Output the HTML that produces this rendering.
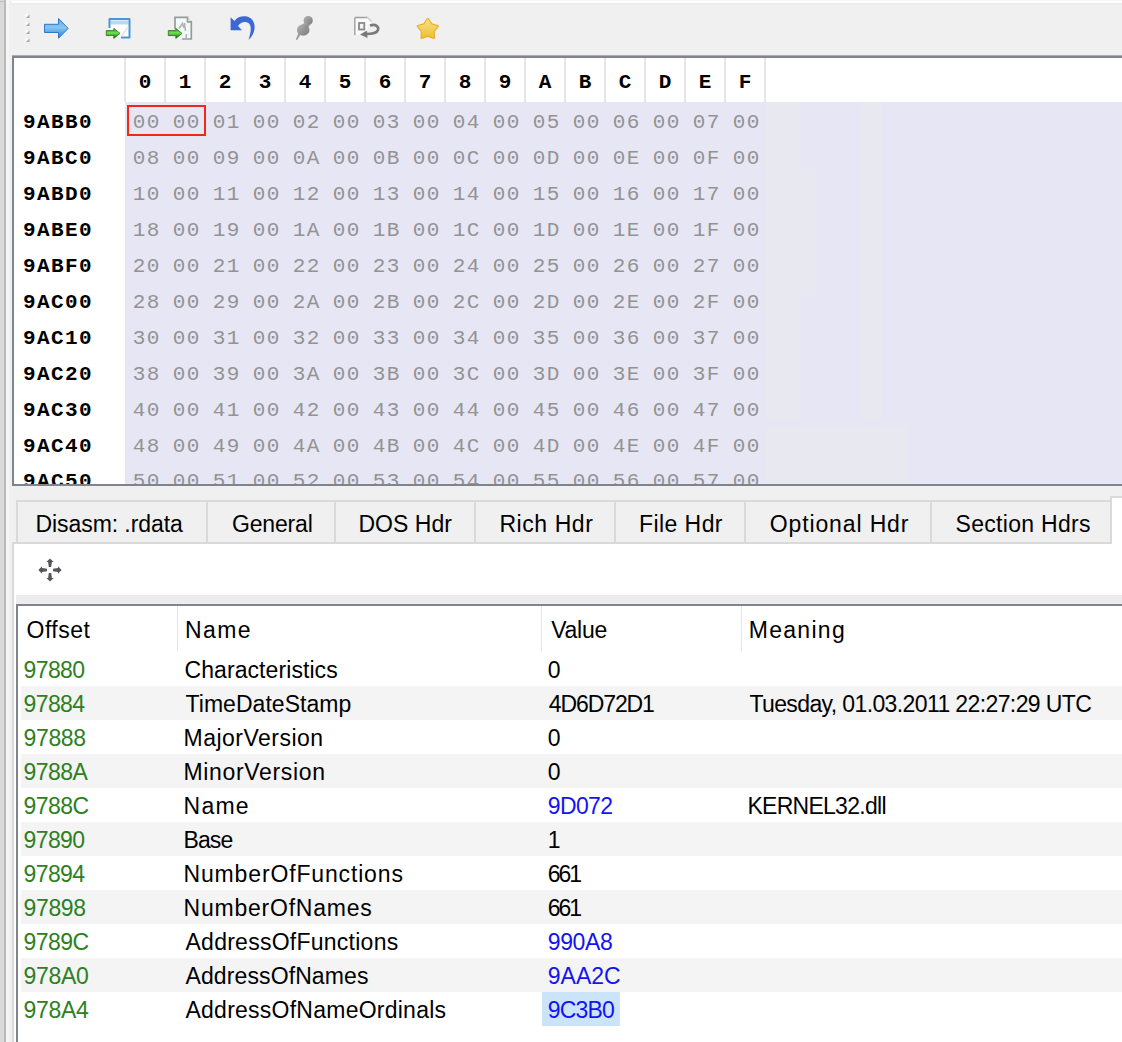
<!DOCTYPE html>
<html><head><meta charset="utf-8"><style>
*{margin:0;padding:0;box-sizing:border-box}
html,body{width:1122px;height:1042px;overflow:hidden;background:#f0f0f0;position:relative}
.a{position:absolute}
.m{font-family:"Liberation Mono", monospace;font-size:21px;letter-spacing:1.4px;white-space:pre;line-height:0}
.s{font-family:"Liberation Sans", sans-serif;font-size:23px;white-space:pre;line-height:0}
</style></head>
<body>
<div class="a" style="left:0;top:0;width:4px;height:1042px;background:#d9d9d9"></div>
<div class="a" style="left:4px;top:0;width:2px;height:1042px;background:#b9b9b9"></div>
<div class="a" style="left:6px;top:0;width:3px;height:1042px;background:#f5f5f5"></div>
<div class="a" style="left:9px;top:0;width:1113px;height:1px;background:#f7f7f7"></div>
<div class="a" style="left:12px;top:1px;width:1110px;height:2px;background:#ffffff"></div>
<div class="a" style="left:0;top:1px;width:6px;height:1px;background:#c0c0c0"></div>
<div class="a" style="left:9px;top:3px;width:1113px;height:2px;background:#ececec"></div>
<svg class="a" style="left:0;top:0" width="470" height="56" viewBox="0 0 470 56">
<defs>
<linearGradient id="bl" x1="0" y1="0" x2="0" y2="1"><stop offset="0" stop-color="#5aa7e3"/><stop offset="0.45" stop-color="#86c6f0"/><stop offset="1" stop-color="#2f7fcf"/></linearGradient>
<linearGradient id="gr" x1="0" y1="0" x2="0" y2="1"><stop offset="0" stop-color="#2f8a22"/><stop offset="0.45" stop-color="#6ae84e"/><stop offset="0.75" stop-color="#3a9a2a"/><stop offset="1" stop-color="#14400c"/></linearGradient>
<linearGradient id="st" x1="0" y1="0" x2="0" y2="1"><stop offset="0" stop-color="#f8e27a"/><stop offset="0.5" stop-color="#f2d060"/><stop offset="1" stop-color="#f0bf2a"/></linearGradient>
<linearGradient id="pin" x1="0" y1="0" x2="1" y2="1"><stop offset="0" stop-color="#b4b4b4"/><stop offset="1" stop-color="#7a7a7a"/></linearGradient>
<filter id="bl1" x="-20%" y="-20%" width="140%" height="140%"><feGaussianBlur stdDeviation="0.6"/></filter>
</defs>
<!-- grip -->
<g fill="#fafafa"><rect x="25" y="14" width="3" height="3"/><rect x="25" y="22" width="3" height="3"/><rect x="25" y="30" width="3" height="3"/><rect x="25" y="38" width="3" height="3"/></g>
<g fill="#a8a8a8"><path d="M29.5,14.5 L29.5,18 L26,18 Z"/><path d="M29.5,22.5 L29.5,26 L26,26 Z"/><path d="M29.5,30.5 L29.5,34 L26,34 Z"/><path d="M29.5,38.5 L29.5,42 L26,42 Z"/></g>
<!-- blue arrow -->
<path d="M44.5,24.3 L58.5,24.3 L58.5,18.5 L68.2,28.4 L58.5,38.3 L58.5,32.5 L44.5,32.5 Z" fill="url(#bl)" stroke="#2f78c8" stroke-width="1" stroke-linejoin="round"/>
<!-- window icon -->
<rect x="110" y="19.5" width="19" height="17.5" fill="#ffffff"/>
<rect x="110.5" y="20.5" width="18" height="4" fill="#b6d9ef"/>
<path d="M109.5,28 L109.5,19 L129.5,19 L129.5,37.5 L121,37.5" fill="none" stroke="#4a95d4" stroke-width="2" stroke-linejoin="round"/>
<path d="M121.5,36 L128,27" stroke="#e6e6e6" stroke-width="2"/>
<path d="M106.3,30.6 L113.8,30.6 L113.8,28.4 L120,33.4 L113.8,38.4 L113.8,35.6 L106.3,35.6 Z" fill="url(#gr)" stroke="#2a6a1c" stroke-width="0.8" stroke-linejoin="round"/>
<!-- document icon -->
<path d="M175,17.3 L187.5,17.3 L191.3,21.5 L191.3,39 L175,39 Z" fill="#f0fafa"/>
<path d="M175,29 L175,17.3 L187.5,17.3 L187.5,21.8 L191.3,21.8 L191.3,39 L182,39" fill="none" stroke="#9a9a9a" stroke-width="1.7"/>
<path d="M187.8,17.5 L191.3,21" stroke="#c8c8c8" stroke-width="1"/>
<path d="M179,28.5 L182.5,23.5 L184,28 M184.5,23 L185.5,31 M186.5,34 L186,38" stroke="#b0b0b0" stroke-width="1.5" fill="none"/>
<path d="M168.3,30.6 L175.8,30.6 L175.8,28.4 L182,33.4 L175.8,38.4 L175.8,35.6 L168.3,35.6 Z" fill="url(#gr)" stroke="#2a6a1c" stroke-width="0.8" stroke-linejoin="round"/>
<!-- undo -->
<path d="M230.6,17.3 L230.6,30.2 L242,30.2 L238,26 C241,21.5 246,21 249,23.5 C252.5,27 250,35 248.5,40 C253,36 256,29 254,23 C251.5,16 244,15.5 239.5,17 C237,18 235.5,19.5 234.5,21 Z" fill="#3b68d2"/>
<!-- pushpin -->
<g fill="url(#pin)" filter="url(#bl1)">
<circle cx="308.2" cy="20.5" r="4.6"/>
<ellipse cx="303.2" cy="30" rx="6.3" ry="5.8"/>
<path d="M305,22 L310,25 L306,29 L302,25 Z"/>
<path d="M298.5,33 L300.5,34.5 L297,40 L295.8,39.5 Z"/>
</g>
<!-- swap/copy icon -->
<path d="M355.5,18 L367.5,18 L371,21.5 L371,24 L368,26 L367,34.5 L355.5,34.5 Z" fill="#fafafa"/>
<path d="M354.8,17.5 L367.5,17.5 M354.8,17.5 L354.8,35" stroke="#a0a0a0" stroke-width="1.4" fill="none"/>
<path d="M367.5,17.5 L371.5,21.5" stroke="#c8c8c8" stroke-width="1.2" fill="none"/>
<rect x="359" y="23" width="5.3" height="6.5" fill="#f4f4f4" stroke="#8a8a8a" stroke-width="1.8"/>
<path d="M370,25.5 C376,23.5 379,27 378,30 C377,33 372,34 366,34" fill="none" stroke="#7a7a7a" stroke-width="2.6"/>
<path d="M360,34.5 L367,30.5 L367.5,38 Z" fill="#7a7a7a"/>
<!-- star -->
<path d="M427.80,18.80 L431.44,24.38 L437.88,26.12 L433.70,31.32 L434.03,37.98 L427.80,35.60 L421.57,37.98 L421.90,31.32 L417.72,26.12 L424.16,24.38 Z" fill="url(#st)" stroke="#e6b02a" stroke-width="2.2" stroke-linejoin="round"/>
<path d="M427.80,18.80 L431.44,24.38 L437.88,26.12 L433.70,31.32 L434.03,37.98 L427.80,35.60 L421.57,37.98 L421.90,31.32 L417.72,26.12 L424.16,24.38 Z" fill="url(#st)" stroke="none"/>
</svg>

<div class="a" style="left:12px;top:55px;width:1110px;height:1px;background:#a9acb2"></div>
<div class="a" style="left:12px;top:56px;width:1110px;height:430px;background:#80848e"></div>
<div class="a" style="left:14px;top:58px;width:1108px;height:426px;background:#ffffff;overflow:hidden">
<div class="a" style="left:111px;top:44px;width:997px;height:400px;background:#e7e6f4"></div>
<div class="a" style="left:110px;top:0;width:2px;height:44px;background:#e6e6e6"></div>
<div class="a" style="left:150px;top:0;width:2px;height:44px;background:#e6e6e6"></div>
<div class="a" style="left:190px;top:0;width:2px;height:44px;background:#e6e6e6"></div>
<div class="a" style="left:230px;top:0;width:2px;height:44px;background:#e6e6e6"></div>
<div class="a" style="left:270px;top:0;width:2px;height:44px;background:#e6e6e6"></div>
<div class="a" style="left:310px;top:0;width:2px;height:44px;background:#e6e6e6"></div>
<div class="a" style="left:350px;top:0;width:2px;height:44px;background:#e6e6e6"></div>
<div class="a" style="left:390px;top:0;width:2px;height:44px;background:#e6e6e6"></div>
<div class="a" style="left:430px;top:0;width:2px;height:44px;background:#e6e6e6"></div>
<div class="a" style="left:470px;top:0;width:2px;height:44px;background:#e6e6e6"></div>
<div class="a" style="left:510px;top:0;width:2px;height:44px;background:#e6e6e6"></div>
<div class="a" style="left:550px;top:0;width:2px;height:44px;background:#e6e6e6"></div>
<div class="a" style="left:590px;top:0;width:2px;height:44px;background:#e6e6e6"></div>
<div class="a" style="left:630px;top:0;width:2px;height:44px;background:#e6e6e6"></div>
<div class="a" style="left:670px;top:0;width:2px;height:44px;background:#e6e6e6"></div>
<div class="a" style="left:710px;top:0;width:2px;height:44px;background:#e6e6e6"></div>
<div class="a" style="left:750px;top:0;width:2px;height:44px;background:#e6e6e6"></div>
<div class="a" style="left:752px;top:44px;width:34px;height:318px;background:#e7e8f0"></div>
<div class="a" style="left:786px;top:111px;width:15px;height:126px;background:#e7e8f0"></div>
<div class="a" style="left:847px;top:44px;width:21px;height:318px;background:#e7e8f0"></div>
<div class="a" style="left:774px;top:368px;width:121px;height:58px;background:#e7e8f0"></div>
<div class="a" style="left:752px;top:368px;width:22px;height:58px;background:#e7e8f0"></div>
<div class="a m" style="left:111px;top:25.41px;width:40px;text-align:center;font-weight:bold;color:#000;letter-spacing:0">0</div>
<div class="a m" style="left:151px;top:25.41px;width:40px;text-align:center;font-weight:bold;color:#000;letter-spacing:0">1</div>
<div class="a m" style="left:191px;top:25.41px;width:40px;text-align:center;font-weight:bold;color:#000;letter-spacing:0">2</div>
<div class="a m" style="left:231px;top:25.41px;width:40px;text-align:center;font-weight:bold;color:#000;letter-spacing:0">3</div>
<div class="a m" style="left:271px;top:25.41px;width:40px;text-align:center;font-weight:bold;color:#000;letter-spacing:0">4</div>
<div class="a m" style="left:311px;top:25.41px;width:40px;text-align:center;font-weight:bold;color:#000;letter-spacing:0">5</div>
<div class="a m" style="left:351px;top:25.41px;width:40px;text-align:center;font-weight:bold;color:#000;letter-spacing:0">6</div>
<div class="a m" style="left:391px;top:25.41px;width:40px;text-align:center;font-weight:bold;color:#000;letter-spacing:0">7</div>
<div class="a m" style="left:431px;top:25.41px;width:40px;text-align:center;font-weight:bold;color:#000;letter-spacing:0">8</div>
<div class="a m" style="left:471px;top:25.41px;width:40px;text-align:center;font-weight:bold;color:#000;letter-spacing:0">9</div>
<div class="a m" style="left:511px;top:25.41px;width:40px;text-align:center;font-weight:bold;color:#000;letter-spacing:0">A</div>
<div class="a m" style="left:551px;top:25.41px;width:40px;text-align:center;font-weight:bold;color:#000;letter-spacing:0">B</div>
<div class="a m" style="left:591px;top:25.41px;width:40px;text-align:center;font-weight:bold;color:#000;letter-spacing:0">C</div>
<div class="a m" style="left:631px;top:25.41px;width:40px;text-align:center;font-weight:bold;color:#000;letter-spacing:0">D</div>
<div class="a m" style="left:671px;top:25.41px;width:40px;text-align:center;font-weight:bold;color:#000;letter-spacing:0">E</div>
<div class="a m" style="left:711px;top:25.41px;width:40px;text-align:center;font-weight:bold;color:#000;letter-spacing:0">F</div>
<div class="a m" style="left:9px;top:65.41px;font-weight:bold;color:#000">9ABB0</div>
<div class="a m" style="left:112px;top:65.41px;width:40px;text-align:center;color:#939393;text-indent:1.4px">00</div>
<div class="a m" style="left:152px;top:65.41px;width:40px;text-align:center;color:#939393;text-indent:1.4px">00</div>
<div class="a m" style="left:192px;top:65.41px;width:40px;text-align:center;color:#939393;text-indent:1.4px">01</div>
<div class="a m" style="left:232px;top:65.41px;width:40px;text-align:center;color:#939393;text-indent:1.4px">00</div>
<div class="a m" style="left:272px;top:65.41px;width:40px;text-align:center;color:#939393;text-indent:1.4px">02</div>
<div class="a m" style="left:312px;top:65.41px;width:40px;text-align:center;color:#939393;text-indent:1.4px">00</div>
<div class="a m" style="left:352px;top:65.41px;width:40px;text-align:center;color:#939393;text-indent:1.4px">03</div>
<div class="a m" style="left:392px;top:65.41px;width:40px;text-align:center;color:#939393;text-indent:1.4px">00</div>
<div class="a m" style="left:432px;top:65.41px;width:40px;text-align:center;color:#939393;text-indent:1.4px">04</div>
<div class="a m" style="left:472px;top:65.41px;width:40px;text-align:center;color:#939393;text-indent:1.4px">00</div>
<div class="a m" style="left:512px;top:65.41px;width:40px;text-align:center;color:#939393;text-indent:1.4px">05</div>
<div class="a m" style="left:552px;top:65.41px;width:40px;text-align:center;color:#939393;text-indent:1.4px">00</div>
<div class="a m" style="left:592px;top:65.41px;width:40px;text-align:center;color:#939393;text-indent:1.4px">06</div>
<div class="a m" style="left:632px;top:65.41px;width:40px;text-align:center;color:#939393;text-indent:1.4px">00</div>
<div class="a m" style="left:672px;top:65.41px;width:40px;text-align:center;color:#939393;text-indent:1.4px">07</div>
<div class="a m" style="left:712px;top:65.41px;width:40px;text-align:center;color:#939393;text-indent:1.4px">00</div>
<div class="a m" style="left:9px;top:101.31px;font-weight:bold;color:#000">9ABC0</div>
<div class="a m" style="left:112px;top:101.31px;width:40px;text-align:center;color:#939393;text-indent:1.4px">08</div>
<div class="a m" style="left:152px;top:101.31px;width:40px;text-align:center;color:#939393;text-indent:1.4px">00</div>
<div class="a m" style="left:192px;top:101.31px;width:40px;text-align:center;color:#939393;text-indent:1.4px">09</div>
<div class="a m" style="left:232px;top:101.31px;width:40px;text-align:center;color:#939393;text-indent:1.4px">00</div>
<div class="a m" style="left:272px;top:101.31px;width:40px;text-align:center;color:#939393;text-indent:1.4px">0A</div>
<div class="a m" style="left:312px;top:101.31px;width:40px;text-align:center;color:#939393;text-indent:1.4px">00</div>
<div class="a m" style="left:352px;top:101.31px;width:40px;text-align:center;color:#939393;text-indent:1.4px">0B</div>
<div class="a m" style="left:392px;top:101.31px;width:40px;text-align:center;color:#939393;text-indent:1.4px">00</div>
<div class="a m" style="left:432px;top:101.31px;width:40px;text-align:center;color:#939393;text-indent:1.4px">0C</div>
<div class="a m" style="left:472px;top:101.31px;width:40px;text-align:center;color:#939393;text-indent:1.4px">00</div>
<div class="a m" style="left:512px;top:101.31px;width:40px;text-align:center;color:#939393;text-indent:1.4px">0D</div>
<div class="a m" style="left:552px;top:101.31px;width:40px;text-align:center;color:#939393;text-indent:1.4px">00</div>
<div class="a m" style="left:592px;top:101.31px;width:40px;text-align:center;color:#939393;text-indent:1.4px">0E</div>
<div class="a m" style="left:632px;top:101.31px;width:40px;text-align:center;color:#939393;text-indent:1.4px">00</div>
<div class="a m" style="left:672px;top:101.31px;width:40px;text-align:center;color:#939393;text-indent:1.4px">0F</div>
<div class="a m" style="left:712px;top:101.31px;width:40px;text-align:center;color:#939393;text-indent:1.4px">00</div>
<div class="a m" style="left:9px;top:137.21px;font-weight:bold;color:#000">9ABD0</div>
<div class="a m" style="left:112px;top:137.21px;width:40px;text-align:center;color:#939393;text-indent:1.4px">10</div>
<div class="a m" style="left:152px;top:137.21px;width:40px;text-align:center;color:#939393;text-indent:1.4px">00</div>
<div class="a m" style="left:192px;top:137.21px;width:40px;text-align:center;color:#939393;text-indent:1.4px">11</div>
<div class="a m" style="left:232px;top:137.21px;width:40px;text-align:center;color:#939393;text-indent:1.4px">00</div>
<div class="a m" style="left:272px;top:137.21px;width:40px;text-align:center;color:#939393;text-indent:1.4px">12</div>
<div class="a m" style="left:312px;top:137.21px;width:40px;text-align:center;color:#939393;text-indent:1.4px">00</div>
<div class="a m" style="left:352px;top:137.21px;width:40px;text-align:center;color:#939393;text-indent:1.4px">13</div>
<div class="a m" style="left:392px;top:137.21px;width:40px;text-align:center;color:#939393;text-indent:1.4px">00</div>
<div class="a m" style="left:432px;top:137.21px;width:40px;text-align:center;color:#939393;text-indent:1.4px">14</div>
<div class="a m" style="left:472px;top:137.21px;width:40px;text-align:center;color:#939393;text-indent:1.4px">00</div>
<div class="a m" style="left:512px;top:137.21px;width:40px;text-align:center;color:#939393;text-indent:1.4px">15</div>
<div class="a m" style="left:552px;top:137.21px;width:40px;text-align:center;color:#939393;text-indent:1.4px">00</div>
<div class="a m" style="left:592px;top:137.21px;width:40px;text-align:center;color:#939393;text-indent:1.4px">16</div>
<div class="a m" style="left:632px;top:137.21px;width:40px;text-align:center;color:#939393;text-indent:1.4px">00</div>
<div class="a m" style="left:672px;top:137.21px;width:40px;text-align:center;color:#939393;text-indent:1.4px">17</div>
<div class="a m" style="left:712px;top:137.21px;width:40px;text-align:center;color:#939393;text-indent:1.4px">00</div>
<div class="a m" style="left:9px;top:173.11px;font-weight:bold;color:#000">9ABE0</div>
<div class="a m" style="left:112px;top:173.11px;width:40px;text-align:center;color:#939393;text-indent:1.4px">18</div>
<div class="a m" style="left:152px;top:173.11px;width:40px;text-align:center;color:#939393;text-indent:1.4px">00</div>
<div class="a m" style="left:192px;top:173.11px;width:40px;text-align:center;color:#939393;text-indent:1.4px">19</div>
<div class="a m" style="left:232px;top:173.11px;width:40px;text-align:center;color:#939393;text-indent:1.4px">00</div>
<div class="a m" style="left:272px;top:173.11px;width:40px;text-align:center;color:#939393;text-indent:1.4px">1A</div>
<div class="a m" style="left:312px;top:173.11px;width:40px;text-align:center;color:#939393;text-indent:1.4px">00</div>
<div class="a m" style="left:352px;top:173.11px;width:40px;text-align:center;color:#939393;text-indent:1.4px">1B</div>
<div class="a m" style="left:392px;top:173.11px;width:40px;text-align:center;color:#939393;text-indent:1.4px">00</div>
<div class="a m" style="left:432px;top:173.11px;width:40px;text-align:center;color:#939393;text-indent:1.4px">1C</div>
<div class="a m" style="left:472px;top:173.11px;width:40px;text-align:center;color:#939393;text-indent:1.4px">00</div>
<div class="a m" style="left:512px;top:173.11px;width:40px;text-align:center;color:#939393;text-indent:1.4px">1D</div>
<div class="a m" style="left:552px;top:173.11px;width:40px;text-align:center;color:#939393;text-indent:1.4px">00</div>
<div class="a m" style="left:592px;top:173.11px;width:40px;text-align:center;color:#939393;text-indent:1.4px">1E</div>
<div class="a m" style="left:632px;top:173.11px;width:40px;text-align:center;color:#939393;text-indent:1.4px">00</div>
<div class="a m" style="left:672px;top:173.11px;width:40px;text-align:center;color:#939393;text-indent:1.4px">1F</div>
<div class="a m" style="left:712px;top:173.11px;width:40px;text-align:center;color:#939393;text-indent:1.4px">00</div>
<div class="a m" style="left:9px;top:209.01px;font-weight:bold;color:#000">9ABF0</div>
<div class="a m" style="left:112px;top:209.01px;width:40px;text-align:center;color:#939393;text-indent:1.4px">20</div>
<div class="a m" style="left:152px;top:209.01px;width:40px;text-align:center;color:#939393;text-indent:1.4px">00</div>
<div class="a m" style="left:192px;top:209.01px;width:40px;text-align:center;color:#939393;text-indent:1.4px">21</div>
<div class="a m" style="left:232px;top:209.01px;width:40px;text-align:center;color:#939393;text-indent:1.4px">00</div>
<div class="a m" style="left:272px;top:209.01px;width:40px;text-align:center;color:#939393;text-indent:1.4px">22</div>
<div class="a m" style="left:312px;top:209.01px;width:40px;text-align:center;color:#939393;text-indent:1.4px">00</div>
<div class="a m" style="left:352px;top:209.01px;width:40px;text-align:center;color:#939393;text-indent:1.4px">23</div>
<div class="a m" style="left:392px;top:209.01px;width:40px;text-align:center;color:#939393;text-indent:1.4px">00</div>
<div class="a m" style="left:432px;top:209.01px;width:40px;text-align:center;color:#939393;text-indent:1.4px">24</div>
<div class="a m" style="left:472px;top:209.01px;width:40px;text-align:center;color:#939393;text-indent:1.4px">00</div>
<div class="a m" style="left:512px;top:209.01px;width:40px;text-align:center;color:#939393;text-indent:1.4px">25</div>
<div class="a m" style="left:552px;top:209.01px;width:40px;text-align:center;color:#939393;text-indent:1.4px">00</div>
<div class="a m" style="left:592px;top:209.01px;width:40px;text-align:center;color:#939393;text-indent:1.4px">26</div>
<div class="a m" style="left:632px;top:209.01px;width:40px;text-align:center;color:#939393;text-indent:1.4px">00</div>
<div class="a m" style="left:672px;top:209.01px;width:40px;text-align:center;color:#939393;text-indent:1.4px">27</div>
<div class="a m" style="left:712px;top:209.01px;width:40px;text-align:center;color:#939393;text-indent:1.4px">00</div>
<div class="a m" style="left:9px;top:244.91px;font-weight:bold;color:#000">9AC00</div>
<div class="a m" style="left:112px;top:244.91px;width:40px;text-align:center;color:#939393;text-indent:1.4px">28</div>
<div class="a m" style="left:152px;top:244.91px;width:40px;text-align:center;color:#939393;text-indent:1.4px">00</div>
<div class="a m" style="left:192px;top:244.91px;width:40px;text-align:center;color:#939393;text-indent:1.4px">29</div>
<div class="a m" style="left:232px;top:244.91px;width:40px;text-align:center;color:#939393;text-indent:1.4px">00</div>
<div class="a m" style="left:272px;top:244.91px;width:40px;text-align:center;color:#939393;text-indent:1.4px">2A</div>
<div class="a m" style="left:312px;top:244.91px;width:40px;text-align:center;color:#939393;text-indent:1.4px">00</div>
<div class="a m" style="left:352px;top:244.91px;width:40px;text-align:center;color:#939393;text-indent:1.4px">2B</div>
<div class="a m" style="left:392px;top:244.91px;width:40px;text-align:center;color:#939393;text-indent:1.4px">00</div>
<div class="a m" style="left:432px;top:244.91px;width:40px;text-align:center;color:#939393;text-indent:1.4px">2C</div>
<div class="a m" style="left:472px;top:244.91px;width:40px;text-align:center;color:#939393;text-indent:1.4px">00</div>
<div class="a m" style="left:512px;top:244.91px;width:40px;text-align:center;color:#939393;text-indent:1.4px">2D</div>
<div class="a m" style="left:552px;top:244.91px;width:40px;text-align:center;color:#939393;text-indent:1.4px">00</div>
<div class="a m" style="left:592px;top:244.91px;width:40px;text-align:center;color:#939393;text-indent:1.4px">2E</div>
<div class="a m" style="left:632px;top:244.91px;width:40px;text-align:center;color:#939393;text-indent:1.4px">00</div>
<div class="a m" style="left:672px;top:244.91px;width:40px;text-align:center;color:#939393;text-indent:1.4px">2F</div>
<div class="a m" style="left:712px;top:244.91px;width:40px;text-align:center;color:#939393;text-indent:1.4px">00</div>
<div class="a m" style="left:9px;top:280.81px;font-weight:bold;color:#000">9AC10</div>
<div class="a m" style="left:112px;top:280.81px;width:40px;text-align:center;color:#939393;text-indent:1.4px">30</div>
<div class="a m" style="left:152px;top:280.81px;width:40px;text-align:center;color:#939393;text-indent:1.4px">00</div>
<div class="a m" style="left:192px;top:280.81px;width:40px;text-align:center;color:#939393;text-indent:1.4px">31</div>
<div class="a m" style="left:232px;top:280.81px;width:40px;text-align:center;color:#939393;text-indent:1.4px">00</div>
<div class="a m" style="left:272px;top:280.81px;width:40px;text-align:center;color:#939393;text-indent:1.4px">32</div>
<div class="a m" style="left:312px;top:280.81px;width:40px;text-align:center;color:#939393;text-indent:1.4px">00</div>
<div class="a m" style="left:352px;top:280.81px;width:40px;text-align:center;color:#939393;text-indent:1.4px">33</div>
<div class="a m" style="left:392px;top:280.81px;width:40px;text-align:center;color:#939393;text-indent:1.4px">00</div>
<div class="a m" style="left:432px;top:280.81px;width:40px;text-align:center;color:#939393;text-indent:1.4px">34</div>
<div class="a m" style="left:472px;top:280.81px;width:40px;text-align:center;color:#939393;text-indent:1.4px">00</div>
<div class="a m" style="left:512px;top:280.81px;width:40px;text-align:center;color:#939393;text-indent:1.4px">35</div>
<div class="a m" style="left:552px;top:280.81px;width:40px;text-align:center;color:#939393;text-indent:1.4px">00</div>
<div class="a m" style="left:592px;top:280.81px;width:40px;text-align:center;color:#939393;text-indent:1.4px">36</div>
<div class="a m" style="left:632px;top:280.81px;width:40px;text-align:center;color:#939393;text-indent:1.4px">00</div>
<div class="a m" style="left:672px;top:280.81px;width:40px;text-align:center;color:#939393;text-indent:1.4px">37</div>
<div class="a m" style="left:712px;top:280.81px;width:40px;text-align:center;color:#939393;text-indent:1.4px">00</div>
<div class="a m" style="left:9px;top:316.71px;font-weight:bold;color:#000">9AC20</div>
<div class="a m" style="left:112px;top:316.71px;width:40px;text-align:center;color:#939393;text-indent:1.4px">38</div>
<div class="a m" style="left:152px;top:316.71px;width:40px;text-align:center;color:#939393;text-indent:1.4px">00</div>
<div class="a m" style="left:192px;top:316.71px;width:40px;text-align:center;color:#939393;text-indent:1.4px">39</div>
<div class="a m" style="left:232px;top:316.71px;width:40px;text-align:center;color:#939393;text-indent:1.4px">00</div>
<div class="a m" style="left:272px;top:316.71px;width:40px;text-align:center;color:#939393;text-indent:1.4px">3A</div>
<div class="a m" style="left:312px;top:316.71px;width:40px;text-align:center;color:#939393;text-indent:1.4px">00</div>
<div class="a m" style="left:352px;top:316.71px;width:40px;text-align:center;color:#939393;text-indent:1.4px">3B</div>
<div class="a m" style="left:392px;top:316.71px;width:40px;text-align:center;color:#939393;text-indent:1.4px">00</div>
<div class="a m" style="left:432px;top:316.71px;width:40px;text-align:center;color:#939393;text-indent:1.4px">3C</div>
<div class="a m" style="left:472px;top:316.71px;width:40px;text-align:center;color:#939393;text-indent:1.4px">00</div>
<div class="a m" style="left:512px;top:316.71px;width:40px;text-align:center;color:#939393;text-indent:1.4px">3D</div>
<div class="a m" style="left:552px;top:316.71px;width:40px;text-align:center;color:#939393;text-indent:1.4px">00</div>
<div class="a m" style="left:592px;top:316.71px;width:40px;text-align:center;color:#939393;text-indent:1.4px">3E</div>
<div class="a m" style="left:632px;top:316.71px;width:40px;text-align:center;color:#939393;text-indent:1.4px">00</div>
<div class="a m" style="left:672px;top:316.71px;width:40px;text-align:center;color:#939393;text-indent:1.4px">3F</div>
<div class="a m" style="left:712px;top:316.71px;width:40px;text-align:center;color:#939393;text-indent:1.4px">00</div>
<div class="a m" style="left:9px;top:352.61px;font-weight:bold;color:#000">9AC30</div>
<div class="a m" style="left:112px;top:352.61px;width:40px;text-align:center;color:#939393;text-indent:1.4px">40</div>
<div class="a m" style="left:152px;top:352.61px;width:40px;text-align:center;color:#939393;text-indent:1.4px">00</div>
<div class="a m" style="left:192px;top:352.61px;width:40px;text-align:center;color:#939393;text-indent:1.4px">41</div>
<div class="a m" style="left:232px;top:352.61px;width:40px;text-align:center;color:#939393;text-indent:1.4px">00</div>
<div class="a m" style="left:272px;top:352.61px;width:40px;text-align:center;color:#939393;text-indent:1.4px">42</div>
<div class="a m" style="left:312px;top:352.61px;width:40px;text-align:center;color:#939393;text-indent:1.4px">00</div>
<div class="a m" style="left:352px;top:352.61px;width:40px;text-align:center;color:#939393;text-indent:1.4px">43</div>
<div class="a m" style="left:392px;top:352.61px;width:40px;text-align:center;color:#939393;text-indent:1.4px">00</div>
<div class="a m" style="left:432px;top:352.61px;width:40px;text-align:center;color:#939393;text-indent:1.4px">44</div>
<div class="a m" style="left:472px;top:352.61px;width:40px;text-align:center;color:#939393;text-indent:1.4px">00</div>
<div class="a m" style="left:512px;top:352.61px;width:40px;text-align:center;color:#939393;text-indent:1.4px">45</div>
<div class="a m" style="left:552px;top:352.61px;width:40px;text-align:center;color:#939393;text-indent:1.4px">00</div>
<div class="a m" style="left:592px;top:352.61px;width:40px;text-align:center;color:#939393;text-indent:1.4px">46</div>
<div class="a m" style="left:632px;top:352.61px;width:40px;text-align:center;color:#939393;text-indent:1.4px">00</div>
<div class="a m" style="left:672px;top:352.61px;width:40px;text-align:center;color:#939393;text-indent:1.4px">47</div>
<div class="a m" style="left:712px;top:352.61px;width:40px;text-align:center;color:#939393;text-indent:1.4px">00</div>
<div class="a m" style="left:9px;top:388.51px;font-weight:bold;color:#000">9AC40</div>
<div class="a m" style="left:112px;top:388.51px;width:40px;text-align:center;color:#939393;text-indent:1.4px">48</div>
<div class="a m" style="left:152px;top:388.51px;width:40px;text-align:center;color:#939393;text-indent:1.4px">00</div>
<div class="a m" style="left:192px;top:388.51px;width:40px;text-align:center;color:#939393;text-indent:1.4px">49</div>
<div class="a m" style="left:232px;top:388.51px;width:40px;text-align:center;color:#939393;text-indent:1.4px">00</div>
<div class="a m" style="left:272px;top:388.51px;width:40px;text-align:center;color:#939393;text-indent:1.4px">4A</div>
<div class="a m" style="left:312px;top:388.51px;width:40px;text-align:center;color:#939393;text-indent:1.4px">00</div>
<div class="a m" style="left:352px;top:388.51px;width:40px;text-align:center;color:#939393;text-indent:1.4px">4B</div>
<div class="a m" style="left:392px;top:388.51px;width:40px;text-align:center;color:#939393;text-indent:1.4px">00</div>
<div class="a m" style="left:432px;top:388.51px;width:40px;text-align:center;color:#939393;text-indent:1.4px">4C</div>
<div class="a m" style="left:472px;top:388.51px;width:40px;text-align:center;color:#939393;text-indent:1.4px">00</div>
<div class="a m" style="left:512px;top:388.51px;width:40px;text-align:center;color:#939393;text-indent:1.4px">4D</div>
<div class="a m" style="left:552px;top:388.51px;width:40px;text-align:center;color:#939393;text-indent:1.4px">00</div>
<div class="a m" style="left:592px;top:388.51px;width:40px;text-align:center;color:#939393;text-indent:1.4px">4E</div>
<div class="a m" style="left:632px;top:388.51px;width:40px;text-align:center;color:#939393;text-indent:1.4px">00</div>
<div class="a m" style="left:672px;top:388.51px;width:40px;text-align:center;color:#939393;text-indent:1.4px">4F</div>
<div class="a m" style="left:712px;top:388.51px;width:40px;text-align:center;color:#939393;text-indent:1.4px">00</div>
<div class="a m" style="left:9px;top:424.41px;font-weight:bold;color:#000">9AC50</div>
<div class="a m" style="left:112px;top:424.41px;width:40px;text-align:center;color:#939393;text-indent:1.4px">50</div>
<div class="a m" style="left:152px;top:424.41px;width:40px;text-align:center;color:#939393;text-indent:1.4px">00</div>
<div class="a m" style="left:192px;top:424.41px;width:40px;text-align:center;color:#939393;text-indent:1.4px">51</div>
<div class="a m" style="left:232px;top:424.41px;width:40px;text-align:center;color:#939393;text-indent:1.4px">00</div>
<div class="a m" style="left:272px;top:424.41px;width:40px;text-align:center;color:#939393;text-indent:1.4px">52</div>
<div class="a m" style="left:312px;top:424.41px;width:40px;text-align:center;color:#939393;text-indent:1.4px">00</div>
<div class="a m" style="left:352px;top:424.41px;width:40px;text-align:center;color:#939393;text-indent:1.4px">53</div>
<div class="a m" style="left:392px;top:424.41px;width:40px;text-align:center;color:#939393;text-indent:1.4px">00</div>
<div class="a m" style="left:432px;top:424.41px;width:40px;text-align:center;color:#939393;text-indent:1.4px">54</div>
<div class="a m" style="left:472px;top:424.41px;width:40px;text-align:center;color:#939393;text-indent:1.4px">00</div>
<div class="a m" style="left:512px;top:424.41px;width:40px;text-align:center;color:#939393;text-indent:1.4px">55</div>
<div class="a m" style="left:552px;top:424.41px;width:40px;text-align:center;color:#939393;text-indent:1.4px">00</div>
<div class="a m" style="left:592px;top:424.41px;width:40px;text-align:center;color:#939393;text-indent:1.4px">56</div>
<div class="a m" style="left:632px;top:424.41px;width:40px;text-align:center;color:#939393;text-indent:1.4px">00</div>
<div class="a m" style="left:672px;top:424.41px;width:40px;text-align:center;color:#939393;text-indent:1.4px">57</div>
<div class="a m" style="left:712px;top:424.41px;width:40px;text-align:center;color:#939393;text-indent:1.4px">00</div>
<div class="a" style="left:113px;top:47px;width:79px;height:31px;border:2px solid #f02818"></div>
</div>
<div class="a" style="left:16px;top:500px;width:192px;height:43px;background:#f0f0f0;border:2px solid #dadada;border-bottom:none"></div>
<div class="a" style="left:206px;top:500px;width:130px;height:43px;background:#f0f0f0;border:2px solid #dadada;border-bottom:none"></div>
<div class="a" style="left:334px;top:500px;width:142px;height:43px;background:#f0f0f0;border:2px solid #dadada;border-bottom:none"></div>
<div class="a" style="left:474px;top:500px;width:142px;height:43px;background:#f0f0f0;border:2px solid #dadada;border-bottom:none"></div>
<div class="a" style="left:614px;top:500px;width:132px;height:43px;background:#f0f0f0;border:2px solid #dadada;border-bottom:none"></div>
<div class="a" style="left:744px;top:500px;width:188px;height:43px;background:#f0f0f0;border:2px solid #dadada;border-bottom:none"></div>
<div class="a" style="left:930px;top:500px;width:182px;height:43px;background:#f0f0f0;border:2px solid #dadada;border-bottom:none"></div>
<div class="a" style="left:1110px;top:496px;width:20px;height:49px;background:#fff;border:2px solid #dadada;border-bottom:none"></div>
<div class="a" style="left:12px;top:542px;width:1110px;height:500px;background:#fff;border:1px solid #d9d9d9;border-width:2px 0 0 2px"></div>
<div class="a" style="left:1112px;top:542px;width:10px;height:3px;background:#fff"></div>
<svg class="a" style="left:30px;top:550px" width="40" height="40" viewBox="-20 -20 40 40">
<defs><filter id="bl2" x="-30%" y="-30%" width="160%" height="160%"><feGaussianBlur stdDeviation="0.5"/></filter></defs>
<g fill="#55555a" filter="url(#bl2)">
<path d="M0,-11.6 L3.7,-8 L1.9,-8 L1.2,-3 L-1.2,-3 L-1.9,-8 L-3.7,-8 Z"/>
<path transform="rotate(90)" d="M0,-11.6 L3.7,-8 L1.9,-8 L1.2,-3 L-1.2,-3 L-1.9,-8 L-3.7,-8 Z"/>
<path transform="rotate(180)" d="M0,-11.6 L3.7,-8 L1.9,-8 L1.2,-3 L-1.2,-3 L-1.9,-8 L-3.7,-8 Z"/>
<path transform="rotate(270)" d="M0,-11.6 L3.7,-8 L1.9,-8 L1.2,-3 L-1.2,-3 L-1.9,-8 L-3.7,-8 Z"/>
</g>
</svg>

<div class="a" style="left:16px;top:595px;width:1106px;height:9px;background:#ececec"></div>
<div class="a" style="left:16px;top:604px;width:1106px;height:438px;background:#80848e"></div>
<div class="a" style="left:18px;top:606px;width:1104px;height:436px;background:#fff"></div>
<div class="a" style="left:177px;top:606px;width:1px;height:45px;background:#e5e5e5"></div>
<div class="a" style="left:541px;top:606px;width:1px;height:45px;background:#e5e5e5"></div>
<div class="a" style="left:741px;top:606px;width:1px;height:45px;background:#e5e5e5"></div>
<div class="a" style="left:21px;top:686px;width:1101px;height:34px;background:#f4f4f4"></div>
<div class="a" style="left:21px;top:754px;width:1101px;height:34px;background:#f4f4f4"></div>
<div class="a" style="left:21px;top:822px;width:1101px;height:34px;background:#f4f4f4"></div>
<div class="a" style="left:21px;top:890px;width:1101px;height:34px;background:#f4f4f4"></div>
<div class="a" style="left:21px;top:958px;width:1101px;height:34px;background:#f4f4f4"></div>
<div class="a" style="left:542px;top:992px;width:78px;height:34px;background:#cce4fa"></div>
<div class="a s" style="left:35.50px;top:523.53px;color:#000;letter-spacing:-0.077px">Disasm: .rdata</div>
<div class="a s" style="left:232.00px;top:523.53px;color:#000;letter-spacing:-0.167px">General</div>
<div class="a s" style="left:358.40px;top:523.53px;color:#000;letter-spacing:0.050px">DOS Hdr</div>
<div class="a s" style="left:499.40px;top:523.53px;color:#000;letter-spacing:0.571px">Rich Hdr</div>
<div class="a s" style="left:639.00px;top:523.53px;color:#000;letter-spacing:0.429px">File Hdr</div>
<div class="a s" style="left:769.80px;top:523.53px;color:#000;letter-spacing:0.864px">Optional Hdr</div>
<div class="a s" style="left:955.50px;top:523.53px;color:#000;letter-spacing:0.309px">Section Hdrs</div>
<div class="a s" style="left:26.50px;top:629.53px;color:#000;letter-spacing:0.500px">Offset</div>
<div class="a s" style="left:184.90px;top:629.53px;color:#000;letter-spacing:1.433px">Name</div>
<div class="a s" style="left:551.20px;top:629.53px;color:#000;letter-spacing:-0.275px">Value</div>
<div class="a s" style="left:748.70px;top:629.53px;color:#000;letter-spacing:1.300px">Meaning</div>
<div class="a s" style="left:23.60px;top:670.03px;color:#2e7f22;letter-spacing:-0.650px">97880</div>
<div class="a s" style="left:184.50px;top:670.03px;color:#000;letter-spacing:0.079px">Characteristics</div>
<div class="a s" style="left:547.80px;top:670.03px;color:#000;letter-spacing:0.000px">0</div>
<div class="a s" style="left:23.60px;top:704.03px;color:#2e7f22;letter-spacing:-0.650px">97884</div>
<div class="a s" style="left:185.50px;top:704.03px;color:#000;letter-spacing:0.042px">TimeDateStamp</div>
<div class="a s" style="left:548.80px;top:704.03px;color:#000;letter-spacing:-1.100px">4D6D72D1</div>
<div class="a s" style="left:749.40px;top:704.03px;color:#000;letter-spacing:-0.613px">Tuesday, 01.03.2011 22:27:29 UTC</div>
<div class="a s" style="left:23.60px;top:738.03px;color:#2e7f22;letter-spacing:-0.400px">97888</div>
<div class="a s" style="left:183.50px;top:738.03px;color:#000;letter-spacing:0.491px">MajorVersion</div>
<div class="a s" style="left:547.80px;top:738.03px;color:#000;letter-spacing:0.000px">0</div>
<div class="a s" style="left:23.60px;top:772.03px;color:#2e7f22;letter-spacing:-0.575px">9788A</div>
<div class="a s" style="left:183.50px;top:772.03px;color:#000;letter-spacing:0.655px">MinorVersion</div>
<div class="a s" style="left:547.80px;top:772.03px;color:#000;letter-spacing:0.000px">0</div>
<div class="a s" style="left:23.60px;top:806.03px;color:#2e7f22;letter-spacing:-0.575px">9788C</div>
<div class="a s" style="left:183.50px;top:806.03px;color:#000;letter-spacing:1.267px">Name</div>
<div class="a s" style="left:547.80px;top:806.03px;color:#1414f0;letter-spacing:-0.650px">9D072</div>
<div class="a s" style="left:747.40px;top:806.03px;color:#000;letter-spacing:-0.718px">KERNEL32.dll</div>
<div class="a s" style="left:23.60px;top:840.03px;color:#2e7f22;letter-spacing:-0.650px">97890</div>
<div class="a s" style="left:183.50px;top:840.03px;color:#000;letter-spacing:-0.900px">Base</div>
<div class="a s" style="left:547.80px;top:840.03px;color:#000;letter-spacing:0.000px">1</div>
<div class="a s" style="left:23.60px;top:874.03px;color:#2e7f22;letter-spacing:-0.650px">97894</div>
<div class="a s" style="left:183.50px;top:874.03px;color:#000;letter-spacing:0.850px">NumberOfFunctions</div>
<div class="a s" style="left:547.80px;top:874.03px;color:#000;letter-spacing:-2.050px">661</div>
<div class="a s" style="left:23.60px;top:908.03px;color:#2e7f22;letter-spacing:-0.400px">97898</div>
<div class="a s" style="left:183.50px;top:908.03px;color:#000;letter-spacing:0.783px">NumberOfNames</div>
<div class="a s" style="left:547.80px;top:908.03px;color:#000;letter-spacing:-2.050px">661</div>
<div class="a s" style="left:23.60px;top:942.03px;color:#2e7f22;letter-spacing:-0.575px">9789C</div>
<div class="a s" style="left:185.50px;top:942.03px;color:#000;letter-spacing:0.253px">AddressOfFunctions</div>
<div class="a s" style="left:547.80px;top:942.03px;color:#1414f0;letter-spacing:-0.400px">990A8</div>
<div class="a s" style="left:23.60px;top:976.03px;color:#2e7f22;letter-spacing:-0.325px">978A0</div>
<div class="a s" style="left:185.50px;top:976.03px;color:#000;letter-spacing:0.108px">AddressOfNames</div>
<div class="a s" style="left:547.80px;top:976.03px;color:#1414f0;letter-spacing:0.000px">9AA2C</div>
<div class="a s" style="left:23.60px;top:1010.03px;color:#2e7f22;letter-spacing:-0.325px">978A4</div>
<div class="a s" style="left:185.50px;top:1010.03px;color:#000;letter-spacing:0.245px">AddressOfNameOrdinals</div>
<div class="a s" style="left:547.80px;top:1010.03px;color:#1414f0;letter-spacing:-0.825px">9C3B0</div>
</body></html>
